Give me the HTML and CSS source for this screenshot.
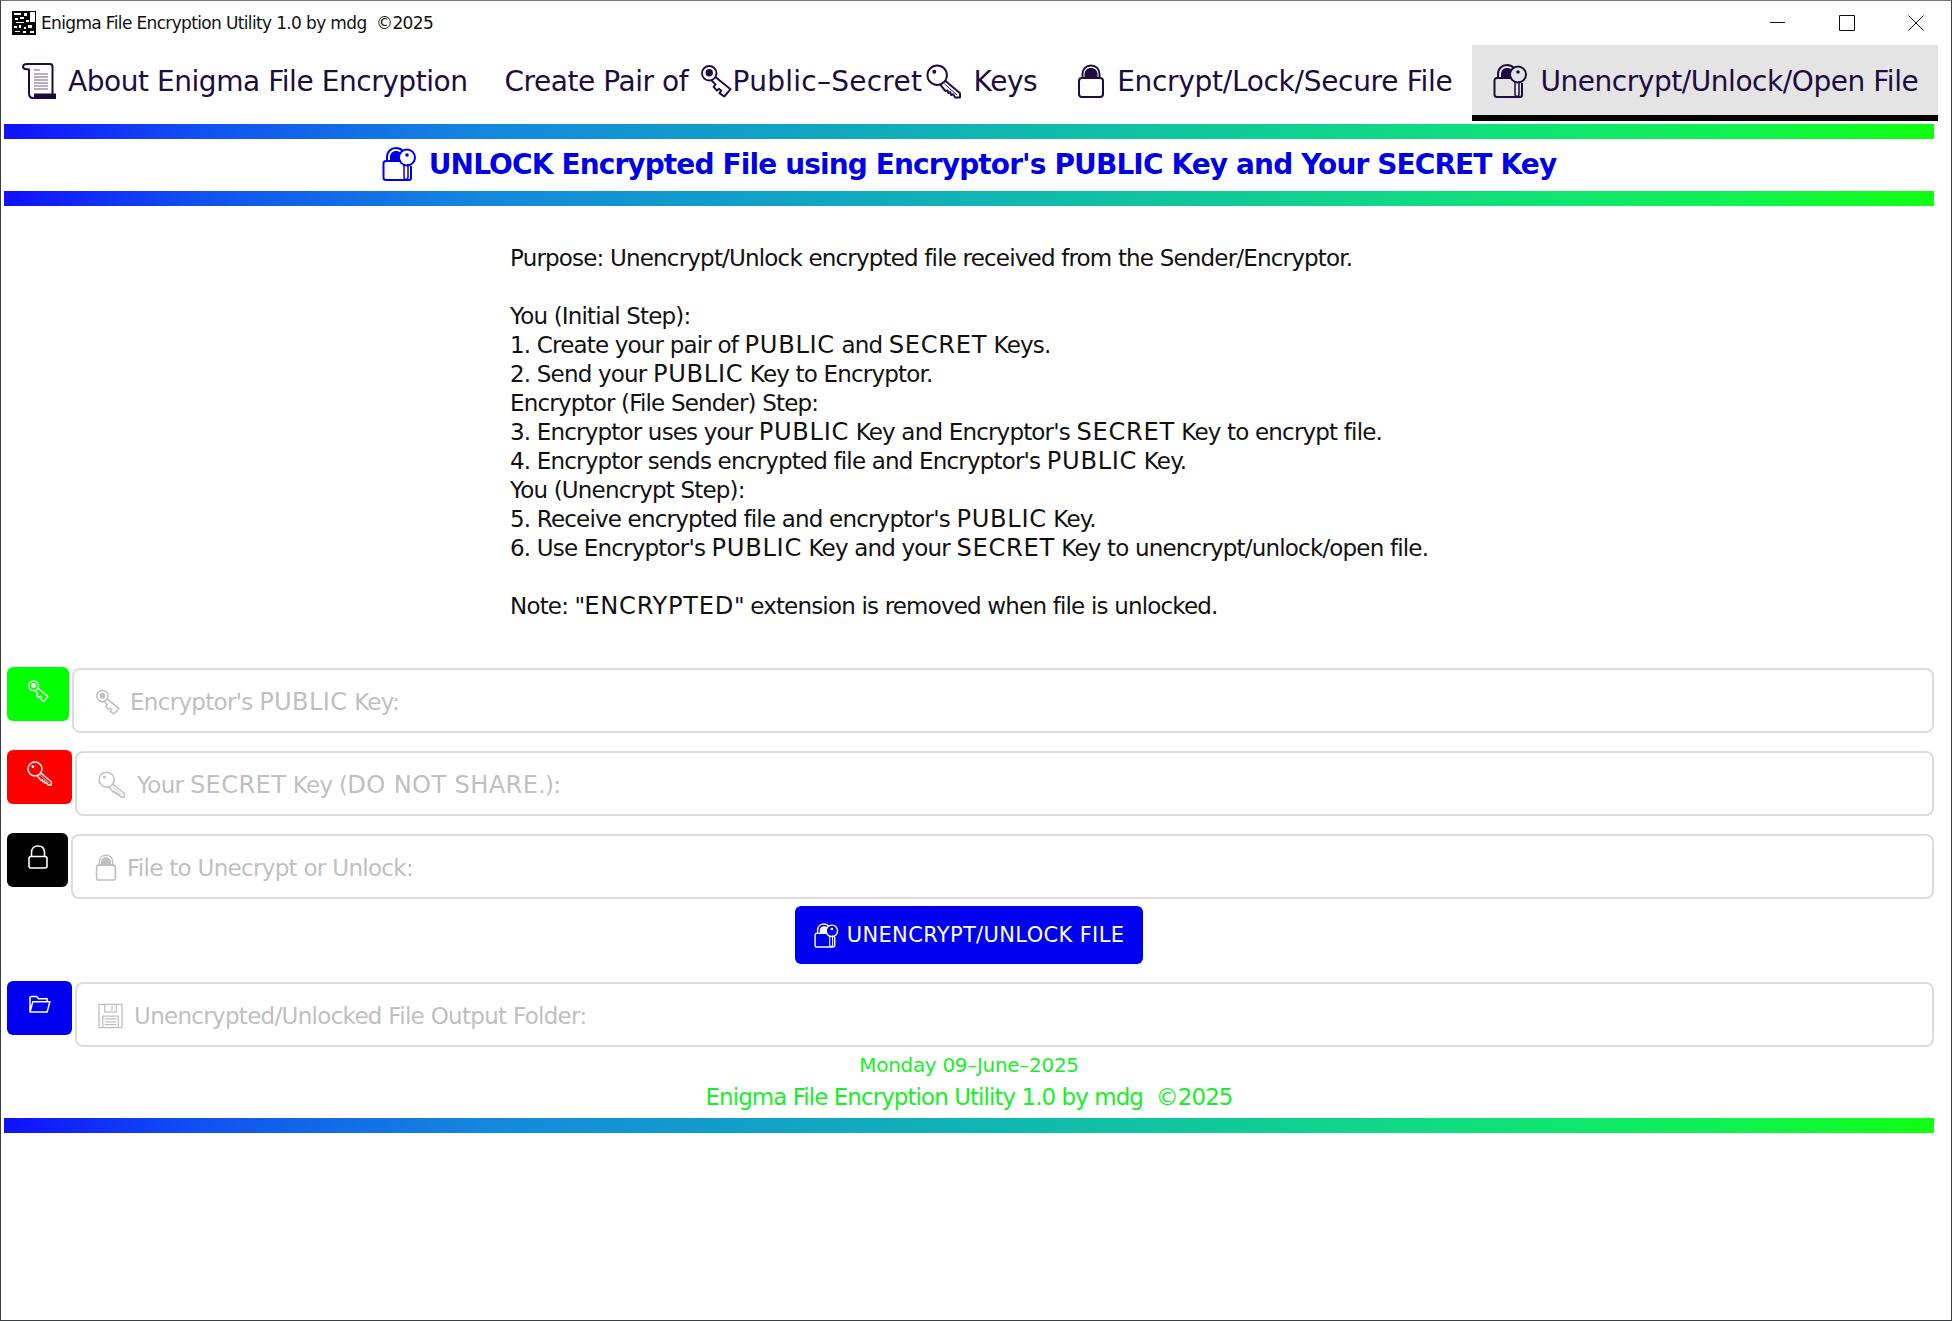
FILE: index.html
```html
<!DOCTYPE html>
<html lang="en">
<head>
<meta charset="utf-8">
<title>Enigma File Encryption Utility</title>
<link rel="stylesheet" href="styles.css">
</head>
<body>
<svg class="defs" width="0" height="0" aria-hidden="true">
  <symbol id="scroll" viewBox="0 0 34 36">
    <path d="M1 4C1 1.500 3 1 5 1H28C30 1 30.500 2.500 30.500 4V31" fill="none" stroke="currentColor" stroke-width="2"/>
    <path d="M1 4C1 6.500 4 6 7 6.500V30C7 33 8 35 11 35H33L33 31.500H12" fill="none" stroke="currentColor" stroke-width="2"/>
    <path d="M12 32H33V35H12Z" fill="currentColor"/>
    <path d="M12 7H18M12 11H26M12 14H26M12 17H26M12 20H26M12 23H26M12 26H26" fill="none" stroke="currentColor" stroke-width="1" opacity=".65"/>
  </symbol>
  <symbol id="pubkey" viewBox="0 0 32 34">
    <g fill="none" stroke="currentColor" stroke-width="2" stroke-linejoin="round">
      <circle cx="8.500" cy="9" r="7.500"/>
      <path d="M14.500 12.500L30.500 25.500L24 33L19 29.500L21 27L18.500 25L16.500 27L13 23L15 20.500L10.500 16"/>
    </g>
    <circle cx="8.500" cy="8.500" r="3.800" fill="currentColor"/>
  </symbol>
  <symbol id="seckey" viewBox="0 0 36 36">
    <g fill="none" stroke="currentColor" stroke-linejoin="round">
      <circle cx="11.500" cy="11.500" r="10" stroke-width="2"/>
      <path d="M19.500 17L35 30V34.500H30L28 31L26 32L25 29L23 30L22 27L20 28L14.500 21" stroke-width="2"/>
      <path d="M19 20.500L32 32" stroke-width="1"/>
    </g>
    <circle cx="8.500" cy="8" r="2" fill="currentColor"/>
  </symbol>
  <symbol id="lock" viewBox="0 0 28 34">
    <path d="M5.500 15V10C5.500 5 9 1.500 14 1.500S22.500 5 22.500 10V15" fill="none" stroke="currentColor" stroke-width="2"/>
    <path d="M7.500 14V10.500C7.500 6.500 10 4 14 4S20.500 6.500 20.500 10.500V14Z" fill="currentColor"/>
    <rect x="2" y="14" width="24" height="19" rx="3" fill="none" stroke="currentColor" stroke-width="2"/>
  </symbol>
  <symbol id="whitelock" viewBox="0 0 20 24">
    <path d="M3.500 12V7.500C3.500 3.500 6 1 10 1S16.500 3.500 16.500 7.500V12" fill="none" stroke="currentColor" stroke-width="1.600"/>
    <rect x="1" y="11.500" width="18" height="11.500" rx="2" fill="none" stroke="currentColor" stroke-width="1.600"/>
  </symbol>
  <symbol id="unlock" viewBox="0 0 35 34">
    <path d="M5 14V10C5 4.500 9 1 14 1C17 1 19 2 21 4" fill="none" stroke="currentColor" stroke-width="2"/>
    <path d="M8 14V10.500C8 6.500 10.500 4 14 4C16 4 17.500 4.500 19 6C17.500 7.500 16.500 9.500 16.800 12L18 14Z" fill="currentColor"/>
    <path d="M18.500 14H4C2.500 14 1.500 15 1.500 16.500V30.500C1.500 32 2.500 33 4 33H27C28 33 29 32 29 31V19" fill="none" stroke="currentColor" stroke-width="2"/>
    <path d="M22 17V31L24 33L26 31V17" fill="none" stroke="currentColor" stroke-width="1.500"/>
    <circle cx="25" cy="10.500" r="8" fill="none" stroke="currentColor" stroke-width="2"/>
    <circle cx="25" cy="8" r="1.800" fill="currentColor"/>
  </symbol>
  <symbol id="folder" viewBox="0 0 24 20">
    <path d="M2 18V3C2 2 3 1.500 4 1.500H9L11 4H20V7M2 18L5 7H23L20 18Z" fill="none" stroke="currentColor" stroke-width="1.600" stroke-linejoin="round"/>
  </symbol>
  <symbol id="floppy" viewBox="0 0 26 26">
    <path d="M1 1H25V25H1Z M7 1V9H19V1 M14.500 2.500V7.500 M5 25V13H21V25 M7 16H19M7 19H19M7 22H19" fill="none" stroke="currentColor" stroke-width="1.300"/>
  </symbol>
</svg>

<div class="window">
  <header class="titlebar">
    <svg class="app-icon" viewBox="0 0 24 24" aria-hidden="true">
      <rect width="24" height="24" fill="#000"/>
      <path d="M2 2h7v2H2zM12 2h3v3h-3zM18 1h5v10h-5zM3 7h3v2H3zM8 6h4v2H8zM4 11h8v1H4zM14 9h3v2h-3zM2 15h3v2H2zM7 14h2v3H7zM12 16h2v2h-2zM16 14h4v3h-4zM3 20h5v1H3zM11 20h3v2h-3zM18 20h4v2h-4z" fill="#fff"/>
    </svg>
    <span class="app-title">Enigma File Encryption Utility 1.0 by mdg &nbsp;©2025</span>
    <div class="window-controls">
      <svg class="win-btn" viewBox="0 0 16 16" aria-hidden="true"><path d="M0 7.500H15"/></svg>
      <svg class="win-btn" viewBox="0 0 16 16" aria-hidden="true"><path d="M.5.500H15.500V15.500H.5Z"/></svg>
      <svg class="win-btn" viewBox="0 0 16 16" aria-hidden="true"><path d="M.5.500L15.500 15.500M15.500.500L.5 15.500"/></svg>
    </div>
  </header>

  <nav class="tabs">
    <div class="tab"><svg class="tab-icon scroll-icon"><use href="#scroll"/></svg>About Enigma File Encryption</div>
    <div class="tab tab-pair">Create Pair of <svg class="tab-icon pub-icon"><use href="#pubkey"/></svg><span class="pair-mid">Public–Secret</span><svg class="tab-icon sec-icon"><use href="#seckey"/></svg> Keys</div>
    <div class="tab tab-lock"><svg class="tab-icon lock-icon"><use href="#lock"/></svg>Encrypt/Lock/Secure File</div>
    <div class="tab tab-active"><svg class="tab-icon unlock-icon"><use href="#unlock"/></svg>Unencrypt/Unlock/Open File</div>
  </nav>

  <main class="content">
    <div class="rule"></div>
    <h1 class="heading"><svg class="heading-icon"><use href="#unlock"/></svg>UNLOCK Encrypted File using Encryptor's PUBLIC Key and Your SECRET Key</h1>
    <div class="rule"></div>

    <div class="purpose">
      <p>Purpose: Unencrypt/Unlock encrypted file received from the Sender/Encryptor.</p>
      <p class="gap">You (Initial Step):</p>
      <p>1. Create your pair of <span class="caps">PUBLIC</span> and <span class="caps">SECRET</span> Keys.</p>
      <p>2. Send your <span class="caps">PUBLIC</span> Key to Encryptor.</p>
      <p>Encryptor (File Sender) Step:</p>
      <p>3. Encryptor uses your <span class="caps">PUBLIC</span> Key and Encryptor's <span class="caps">SECRET</span> Key to encrypt file.</p>
      <p>4. Encryptor sends encrypted file and Encryptor's <span class="caps">PUBLIC</span> Key.</p>
      <p>You (Unencrypt Step):</p>
      <p>5. Receive encrypted file and encryptor's <span class="caps">PUBLIC</span> Key.</p>
      <p>6. Use Encryptor's <span class="caps">PUBLIC</span> Key and your <span class="caps">SECRET</span> Key to unencrypt/unlock/open file.</p>
      <p class="gap">Note: "<span class="caps">ENCRYPTED</span>" extension is removed when file is unlocked.</p>
    </div>

    <div class="field-row">
      <button class="pick pick-green"><svg class="pick-icon ic-pub"><use href="#pubkey"/></svg></button>
      <div class="field"><svg class="field-icon ic-fpub"><use href="#pubkey"/></svg><span>Encryptor's <span class="caps">PUBLIC</span> Key:</span></div>
    </div>
    <div class="field-row">
      <button class="pick pick-red"><svg class="pick-icon ic-sec"><use href="#seckey"/></svg></button>
      <div class="field"><svg class="field-icon ic-fsec"><use href="#seckey"/></svg><span>Your <span class="caps">SECRET</span> Key (<span class="caps">DO NOT SHARE</span>.):</span></div>
    </div>
    <div class="field-row">
      <button class="pick pick-black"><svg class="pick-icon ic-lock"><use href="#whitelock"/></svg></button>
      <div class="field"><svg class="field-icon ic-flock"><use href="#lock"/></svg>File to Unecrypt or Unlock:</div>
    </div>

    <div class="action-row">
      <button class="action"><svg class="action-icon"><use href="#unlock"/></svg>UNENCRYPT/UNLOCK FILE</button>
    </div>

    <div class="field-row field-row-last">
      <button class="pick pick-blue"><svg class="pick-icon ic-folder"><use href="#folder"/></svg></button>
      <div class="field"><svg class="field-icon ic-floppy"><use href="#floppy"/></svg>Unencrypted/Unlocked File Output Folder:</div>
    </div>

    <div class="date">Monday 09–June–2025</div>
    <div class="footer-title">Enigma File Encryption Utility 1.0 by mdg &nbsp;©2025</div>
    <div class="rule"></div>
  </main>
</div>
</body>
</html>
```
FILE: styles.css
```css
* { box-sizing: border-box; }
html, body { margin: 0; height: 100%; background: #fff; }
body { font-family: "DejaVu Sans", sans-serif; }
.defs { position: absolute; }
.window {
  height: 1321px;
  border: 1px solid #3a3f44;
  border-top-color: #777;
  display: flex;
  flex-direction: column;
  overflow: hidden;
}
.titlebar {
  height: 44px;
  flex: none;
  display: flex;
  align-items: center;
  padding-left: 11px;
  color: #111;
  font-size: 17px;
  letter-spacing: -.65px;
}
.app-icon { width: 24px; height: 24px; margin-right: 5px; }
.app-title { white-space: pre; }
.window-controls { margin-left: auto; display: flex; gap: 53px; padding-right: 27px; align-items: center; }
.win-btn { width: 16px; height: 16px; fill: none; stroke: #111; stroke-width: 1; }
.tabs { display: flex; height: 76px; flex: none; color: #1c0c3f; }
.tab {
  display: flex;
  align-items: center;
  padding: 2px 20px 0 21px;
  border-bottom: 6px solid transparent;
  font-size: 28px;
  letter-spacing: -.45px;
  white-space: pre;
}
.tab-pair { padding-left: 17px; }
.pair-mid { letter-spacing: .25px; }
.tab-lock { padding-left: 20px; letter-spacing: -.3px; }
.tab-active { background: #e4e4e4; border-bottom-color: #000; margin-left: auto; margin-right: 13px; }
.tab-icon { flex: none; }
.scroll-icon { width: 34px; height: 36px; margin-right: 12px; }
.pub-icon { width: 31px; height: 34px; margin: 0 1px 0 4px; }
.sec-icon { width: 35px; height: 35px; margin: 0 4px; }
.lock-icon { width: 28px; height: 34px; margin-right: 12px; }
.unlock-icon { width: 35px; height: 34px; margin-right: 12px; }
.content { padding: 3px 17px 0 3px; }
.rule { height: 15px; background: linear-gradient(90deg, #1010ff, #1050f2 10%, #1488dd 25%, #10b4b4 50%, #10dd80 75%, #10f250 90%, #10ff10); }
.heading {
  height: 52px;
  margin: 0;
  padding-bottom: 2px;
  display: flex;
  align-items: center;
  justify-content: center;
  color: #0000e6;
  font-size: 28px;
  font-weight: 700;
  letter-spacing: -.88px;
}
.heading-icon { width: 35px; height: 34px; margin-right: 12px; }
.purpose { margin: 38px 0 0 506px; font-size: 23px; line-height: 29px; color: #111; letter-spacing: -.82px; height: 423px; }
.purpose p { margin: 0; }
.purpose .gap { margin-top: 29px; }
.caps { font-size: 1.05em; letter-spacing: .7px; }
.field-row { display: flex; height: 66px; margin-bottom: 17px; padding-left: 3px; gap: 3px; }
.pick {
  width: 62px;
  height: 54px;
  border: 0;
  border-radius: 6px;
  color: #fff;
  padding: 0 0 7px;
  display: flex;
  align-items: center;
  justify-content: center;
  flex: none;
}
.pick-green { background: #00ff00; width: 62px; }
.pick-red { background: #ff0000; width: 65px; }
.pick-black { background: #000; width: 61px; }
.pick-blue { background: #0000f0; width: 65px; }
.pick-icon { flex: none; }
.ic-pub { width: 21px; height: 24px; }
.ic-sec { width: 25px; height: 25px; }
.ic-lock { width: 20px; height: 24px; }
.ic-folder { width: 23px; height: 19px; }
.field {
  flex: 1;
  height: 65px;
  margin-top: 1px;
  border: 2px solid #dcdcdc;
  border-radius: 8px;
  display: flex;
  align-items: center;
  padding: 2px 0 0 21px;
  color: #bfbfbf;
  font-size: 23px;
  letter-spacing: -.7px;
  background: #fff;
}
.field .caps { letter-spacing: .35px; }
.field-icon { flex: none; margin-right: 10px; }
.ic-fpub { width: 24px; height: 26px; margin-left: 1px; }
.ic-fsec { width: 27px; height: 27px; margin-right: 12px; }
.ic-flock { width: 22px; height: 27px; margin-left: 1px; }
.ic-floppy { width: 25px; height: 26px; margin-right: 11px; }
.action-row { display: flex; justify-content: center; margin-top: -10px; height: 75px; }
.action {
  width: 348px;
  height: 58px;
  border: 0;
  border-radius: 6px;
  background: #0000f0;
  color: #fff;
  font-family: inherit;
  font-size: 21px;
  letter-spacing: .35px;
  padding: 0;
  display: flex;
  align-items: center;
  justify-content: center;
}
.action-icon { width: 25px; height: 25px; margin-right: 8px; }
.field-row-last { margin-bottom: 0; height: 66px; }
.date { text-align: center; color: #18ee28; font-size: 20px; letter-spacing: -.3px; line-height: 30px; margin-top: 3px; }
.footer-title { text-align: center; color: #18ee28; font-size: 23px; letter-spacing: -.95px; line-height: 34px; margin-bottom: 4px; }
```
